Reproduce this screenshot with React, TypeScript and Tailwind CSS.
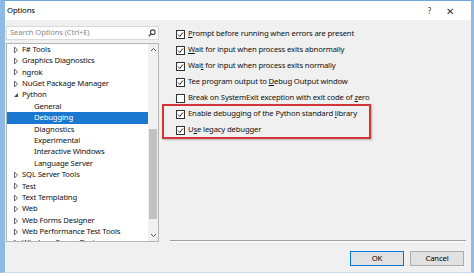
import React from 'react';

type Node = { label: string; level: 0 | 1; kind?: 'closed' | 'open'; selected?: boolean };

const tree: Node[] = [
  { label: 'F# Tools', level: 0, kind: 'closed' },
  { label: 'Graphics Diagnostics', level: 0, kind: 'closed' },
  { label: 'ngrok', level: 0, kind: 'closed' },
  { label: 'NuGet Package Manager', level: 0, kind: 'closed' },
  { label: 'Python', level: 0, kind: 'open' },
  { label: 'General', level: 1 },
  { label: 'Debugging', level: 1, selected: true },
  { label: 'Diagnostics', level: 1 },
  { label: 'Experimental', level: 1 },
  { label: 'Interactive Windows', level: 1 },
  { label: 'Language Server', level: 1 },
  { label: 'SQL Server Tools', level: 0, kind: 'closed' },
  { label: 'Test', level: 0, kind: 'closed' },
  { label: 'Text Templating', level: 0, kind: 'closed' },
  { label: 'Web', level: 0, kind: 'closed' },
  { label: 'Web Forms Designer', level: 0, kind: 'closed' },
  { label: 'Web Performance Test Tools', level: 0, kind: 'closed' },
  { label: 'Windows Forms Designer', level: 0, kind: 'closed' },
];

function Arrow({ kind }: { kind: 'closed' | 'open' }) {
  if (kind === 'open') {
    return (
      <svg width="6" height="6" viewBox="0 0 6 6">
        <path d="M5 1 L5 5 L1 5 Z" fill="#444" />
      </svg>
    );
  }
  return (
    <svg width="6" height="8" viewBox="0 0 6 8">
      <path d="M1.5 1 L4.5 4 L1.5 7 Z" fill="none" stroke="#666" strokeWidth="1" />
    </svg>
  );
}

function Checkbox({ checked }: { checked: boolean }) {
  return (
    <svg width="9" height="9" viewBox="0 0 9 9" className="shrink-0">
      <rect x="0.5" y="0.5" width="8" height="8" fill="#fff" stroke="#333" />
      {checked && <path d="M2 4.5 L3.8 6.3 L7 2.5" fill="none" stroke="#222" strokeWidth="1" />}
    </svg>
  );
}

function Option({ checked, children }: { checked: boolean; children: React.ReactNode }) {
  return (
    <div className="flex items-center gap-[3px] h-4">
      <Checkbox checked={checked} />
      <span className="whitespace-nowrap leading-none">{children}</span>
    </div>
  );
}

export default function App() {
  return (
    <div
      className="w-[474px] h-[276px] bg-white overflow-hidden text-[7.7px] tracking-[-0.15px] text-[#111]"
      style={{ fontFamily: '"Noto Sans", "Open Sans", sans-serif' }}
    >
      <div className="relative h-[273px] flex flex-col border-t border-[#6fa6dc] border-l-[5px] border-l-[#8dbbe6] border-r-[3px] border-r-[#8dbbe6] border-b border-b-[#c9d9ea]">
        {/* Title bar */}
        <div className="h-[19px] bg-white flex items-center pl-[2px] pr-[17px]">
          <span className="text-[7.8px] leading-none text-black">Options</span>
          <span className="ml-auto text-[8px] leading-none text-[#333]">?</span>
          <span className="ml-[15px] text-[10px] leading-none text-[#333]">✕</span>
        </div>

        <div className="flex-1 bg-[#f0f0f0] flex flex-col">
          <div className="flex flex-1">
            {/* Left column */}
            <div className="w-[154px] pl-[1px] pt-[6px] flex flex-col gap-[3px]">
              <div className="h-[14px] bg-white border border-[#d9d9d9] flex items-center pl-[3px] pr-[2px]">
                <span className="text-[#8a8a8a] leading-none">Search Options (Ctrl+E)</span>
                <svg width="8" height="8" viewBox="0 0 8 8" className="ml-auto">
                  <circle cx="4.8" cy="3.2" r="2.3" fill="none" stroke="#444" strokeWidth="1.1" />
                  <path d="M3.1 4.9 L0.8 7.2" stroke="#444" strokeWidth="1.3" />
                </svg>
              </div>
              <div className="h-[199px] bg-white border border-[#b5b5b5] flex overflow-hidden">
                <div className="flex-1 overflow-hidden">
                  {tree.map((n) => (
                    <div
                      key={n.label}
                      className={
                        'h-[11.4px] leading-none flex items-center whitespace-nowrap ' +
                        (n.selected ? 'bg-[#1b78d0] text-white' : '')
                      }
                    >
                      <div className="w-[15px] flex justify-end pr-[3px]">
                        {n.level === 0 && n.kind && <Arrow kind={n.kind} />}
                      </div>
                      <span className={n.level === 1 ? 'pl-[12px]' : ''}>{n.label}</span>
                    </div>
                  ))}
                </div>
                <div className="w-[10px] bg-[#f0f0f0] flex flex-col items-center">
                  <svg width="7" height="10" viewBox="0 0 7 10" className="mt-[1px]">
                    <path d="M1 6 L3.5 3.5 L6 6" fill="none" stroke="#555" strokeWidth="1" />
                  </svg>
                  <div className="mt-[74px] w-[8px] h-[90px] bg-[#c2c2c2]" />
                  <svg width="7" height="10" viewBox="0 0 7 10" className="mt-auto mb-[1px]">
                    <path d="M1 4 L3.5 6.5 L6 4" fill="none" stroke="#555" strokeWidth="1" />
                  </svg>
                </div>
              </div>
            </div>

            {/* Right column */}
            <div className="flex-1 flex flex-col pl-[17px] pr-[5px] pt-[6px]">
              <div className="flex flex-col">
                <Option checked>
                  <u>P</u>rompt before running when errors are present
                </Option>
                <Option checked>
                  <u>W</u>ait for input when process exits abnormally
                </Option>
                <Option checked>
                  Wai<u>t</u> for input when process exits normally
                </Option>
                <Option checked>
                  Tee program output to <u>D</u>ebug Output window
                </Option>
                <Option checked={false}>
                  Break on SystemExit exception with exit code of <u>z</u>ero
                </Option>
                <Option checked>
                  Enable debugging of the Python standard <u>l</u>ibrary
                </Option>
                <Option checked>
                  U<u>s</u>e legacy debugger
                </Option>
              </div>
              <div className="mt-auto -ml-[6px] mb-[1px] h-[2px] border-t border-[#a0a0a0] border-b border-b-white" />
            </div>
          </div>

          {/* Buttons */}
          <div className="flex justify-end gap-[6px] pr-[7px] pt-[8px] pb-[6px]">
            <button className="w-[54px] h-[15px] bg-[#e1e1e1] border border-[#0078d7] leading-none text-black">
              OK
            </button>
            <button className="w-[54px] h-[15px] bg-[#e1e1e1] border border-[#adadad] leading-none text-black">
              Cancel
            </button>
          </div>
        </div>

        {/* annotation box */}
        <div className="absolute left-[157px] top-[103px] w-[209px] h-[35px] border-2 border-[#d1343b] shadow-[1px_1px_2px_rgba(0,0,0,0.25)]" />
      </div>
    </div>
  );
}
